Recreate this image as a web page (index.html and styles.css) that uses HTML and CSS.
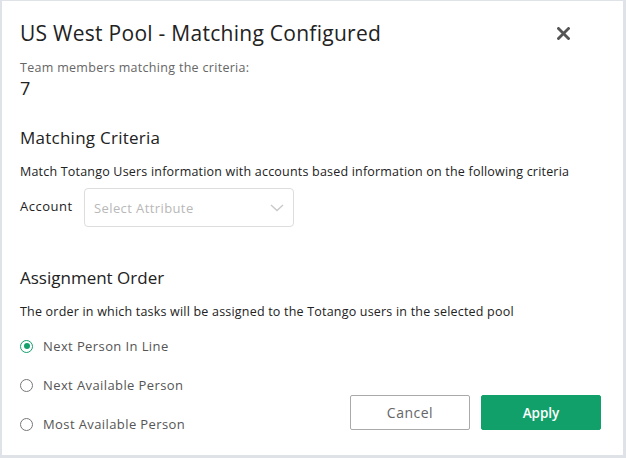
FILE: index.html
```html
<!DOCTYPE html>
<html>
<head>
<meta charset="utf-8">
<link rel="stylesheet" href="styles.css">
</head>
<body>
<div class="modal">
  <div class="header">
    <h1 class="title">US West Pool - Matching Configured</h1>
    <button class="close" aria-label="Close">
      <svg width="13" height="13" viewBox="0 0 13 13"><path d="M1.5 1.5 L11.5 11.5 M11.5 1.5 L1.5 11.5" stroke="#555" stroke-width="2.8" stroke-linecap="square"/></svg>
    </button>
  </div>
  <div class="members-label">Team members matching the criteria:</div>
  <div class="members-count">7</div>

  <h2 class="section-title crit">Matching Criteria</h2>
  <p class="desc">Match Totango Users information with accounts based information on the following criteria</p>
  <div class="field">
    <span class="field-label">Account</span>
    <div class="select">
      <span class="placeholder">Select Attribute</span>
      <svg width="14" height="8" viewBox="0 0 14 8"><path d="M1 1 L7 6.5 L13 1" fill="none" stroke="#c9c9c9" stroke-width="1.4"/></svg>
    </div>
  </div>

  <h2 class="section-title order">Assignment Order</h2>
  <p class="desc">The order in which tasks will be assigned to the Totango users in the selected pool</p>

  <div class="bottom">
    <div class="radios">
      <label class="radio"><span class="dot checked"></span>Next Person In Line</label>
      <label class="radio"><span class="dot"></span>Next Available Person</label>
      <label class="radio"><span class="dot"></span>Most Available Person</label>
    </div>
    <div class="actions">
      <button class="btn cancel">Cancel</button>
      <button class="btn apply">Apply</button>
    </div>
  </div>
</div>
</body>
</html>
```
FILE: styles.css
```css
html, body {
  margin: 0;
  padding: 0;
}
body {
  background: #dfe3e8;
  width: 626px;
  height: 458px;
  font-family: "Open Sans", "Liberation Sans", sans-serif;
  color: #222;
}
.modal {
  box-sizing: border-box;
  margin: 1px 3px 0 2px;
  width: 621px;
  height: 454px;
  background: #fff;
  padding: 0 22px 0 18px;
}
.header {
  display: flex;
  justify-content: space-between;
  align-items: center;
  padding-top: 19px;
  height: 26px;
}
.title {
  margin: 0;
  font-size: 21px;
  font-weight: 400;
  color: #222;
  letter-spacing: 0.27px;
}
.close {
  border: 0;
  background: none;
  padding: 0;
  margin-right: 31px;
  margin-top: 0;
  width: 13px;
  height: 13px;
  display: flex;
}
.members-label {
  margin-top: 13px;
  font-size: 12.5px;
  letter-spacing: 0.3px;
  color: #666;
}
.members-count {
  font-size: 18px;
  margin-top: 1px;
  line-height: 22px;
  color: #222;
}
.section-title {
  margin: 0;
  font-size: 17px;
  font-weight: 500;
  color: #222;
}
.crit { margin-top: 27px; letter-spacing: 0.25px; }
.order { margin-top: 39px; }
.desc {
  margin: 14px 0 0;
  font-size: 12.5px;
  letter-spacing: 0.2px;
  font-weight: 500;
  color: #222;
}
.field {
  display: flex;
  align-items: center;
  margin-top: 8px;
}
.field-label {
  font-size: 13px;
  letter-spacing: 0.5px;
  width: 64px;
  margin-top: -4px;
}
.select {
  box-sizing: border-box;
  width: 210px;
  height: 39px;
  border: 1px solid #ddd;
  border-radius: 4px;
  display: flex;
  align-items: center;
  justify-content: space-between;
  padding: 0 9px 0 9px;
}
.placeholder {
  font-size: 13px;
  letter-spacing: 0.4px;
  color: #b8b8b8;
}
.bottom {
  display: flex;
  justify-content: space-between;
  align-items: flex-end;
  margin-top: 17px;
}
.radios {
  display: flex;
  flex-direction: column;
  gap: 21px;
}
.radio {
  display: flex;
  align-items: center;
  font-size: 13px;
  letter-spacing: 0.4px;
  color: #555;
  height: 18px;
}
.dot {
  box-sizing: border-box;
  width: 13px;
  height: 13px;
  border: 1px solid #777;
  border-radius: 50%;
  margin-right: 10px;
  display: flex;
  align-items: center;
  justify-content: center;
}
.dot.checked {
  border: 1.5px solid #14a06a;
}
.dot.checked::after {
  content: "";
  width: 6px;
  height: 6px;
  border-radius: 50%;
  background: #14a06a;
}
.actions {
  display: flex;
  gap: 11px;
  margin-bottom: 3px;
}
.btn {
  box-sizing: border-box;
  width: 120px;
  height: 35px;
  border-radius: 2px;
  font-family: inherit;
}
.cancel {
  background: #fff;
  border: 1px solid #aaa;
  color: #666;
  font-size: 14px;
  letter-spacing: 0.5px;
}
.apply {
  background: #12a06a;
  border: 1px solid #12a06a;
  color: #fff;
  font-weight: 600;
  font-size: 13.5px;
}
```
